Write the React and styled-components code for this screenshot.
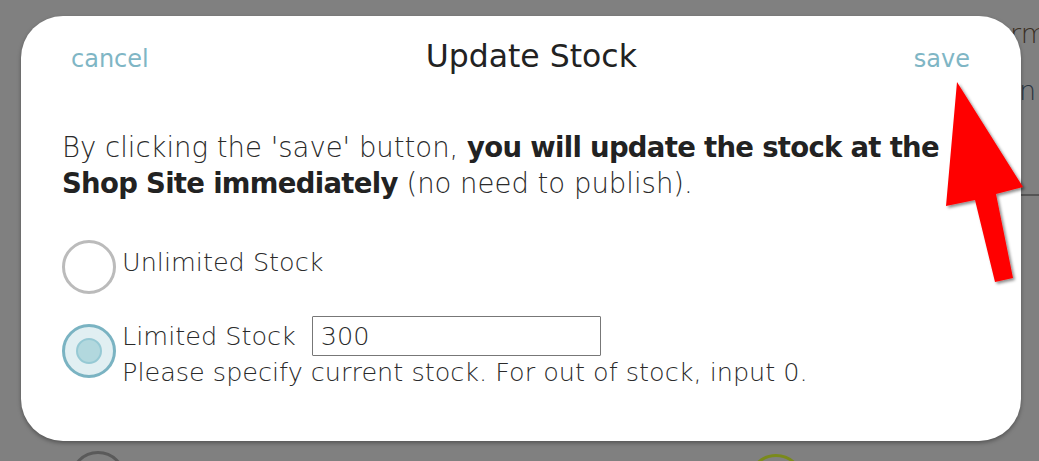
import React from "react";
import styled, { createGlobalStyle } from "styled-components";

const Global = createGlobalStyle`
  html, body { margin: 0; padding: 0; }
  body { width: 1039px; height: 461px; overflow: hidden; font-family: "DejaVu Sans", "Open Sans", sans-serif; }
`;

const Page = styled.div`
  position: relative;
  width: 1039px;
  height: 461px;
  overflow: hidden;
  background: #808080;
`;

const BgLayout = styled.div`
  display: grid;
  grid-template-columns: 1fr 60px;
  grid-template-rows: 196px 1fr;
  height: 100%;
`;

const BgSide = styled.div`
  grid-column: 2;
  display: flex;
  flex-direction: column;
  gap: 26px;
  padding-top: 18px;
  border-bottom: 2px solid #555;
  font-size: 27px;
  font-weight: 200;
  white-space: nowrap;
  overflow: hidden;
  direction: rtl;
`;

const BgWord = styled.span`
  color: ${(p) => p.$color};
  direction: ltr;
  text-align: right;
  margin-right: ${(p) => p.$shift}px;
`;

const BgBottom = styled.div`
  grid-column: 1 / span 2;
  display: flex;
  align-items: flex-start;
  padding: 255px 0 0 70px;
  gap: 622px;
`;

const BgCircle = styled.div`
  width: 50px;
  height: 50px;
  border-radius: 50%;
  border: 3px solid ${(p) => p.$color};
  margin-top: ${(p) => p.$top}px;
  flex: none;
`;

const Modal = styled.div`
  position: absolute;
  top: 16px;
  left: 21px;
  width: 1000px;
  height: 425px;
  box-sizing: border-box;
  background: #fff;
  border-radius: 42px;
  box-shadow: 0 2px 4px rgba(0, 0, 0, 0.35);
  display: flex;
  flex-direction: column;
`;

const Header = styled.div`
  display: flex;
  justify-content: space-between;
  align-items: baseline;
  padding: 20px 51px 0 50px;
`;

const LinkButton = styled.button`
  background: none;
  border: none;
  padding: 0;
  font-family: inherit;
  font-size: 24px;
  line-height: 40px;
  font-weight: 400;
  color: #7fb6c5;
  cursor: pointer;
`;

const Title = styled.h1`
  margin: 0;
  font-size: 31.5px;
  line-height: 40px;
  font-weight: 400;
  color: #222;
`;

const Body = styled.div`
  display: flex;
  flex-direction: column;
  padding: 50px 50px 0 41px;
`;

const Intro = styled.p`
  margin: 0;
  font-size: 27.5px;
  line-height: 36px;
  font-weight: 200;
  color: #2a2a2a;
  b { font-weight: 700; color: #222; letter-spacing: -0.7px; }
`;

const Options = styled.div`
  display: flex;
  flex-direction: column;
  gap: 30px;
  margin-top: 39px;
`;

const Option = styled.label`
  display: flex;
  align-items: flex-start;
  gap: 6px;
`;

const Radio = styled.span`
  flex: none;
  width: 48px;
  height: 48px;
  border-radius: 50%;
  border: 3px solid ${(p) => (p.$checked ? "#7ab3c2" : "#bbb")};
  background: ${(p) => (p.$checked ? "#e1eff2" : "#fff")};
  display: flex;
  align-items: center;
  justify-content: center;
`;

const RadioDot = styled.span`
  width: 22px;
  height: 22px;
  border-radius: 50%;
  background: #b2d8de;
  border: 2px solid #96c9d4;
`;

const OptionText = styled.div`
  display: flex;
  flex-direction: column;
  font-size: 25.5px;
  font-weight: 200;
  color: #2a2a2a;
  line-height: ${(p) => p.$lh}px;
  margin-top: ${(p) => p.$mt}px;
`;

const LabelRow = styled.div`
  display: flex;
  align-items: center;
  gap: 16px;
`;

const StockInput = styled.input`
  width: 289px;
  height: 40px;
  box-sizing: border-box;
  border: 1px solid #777;
  border-radius: 1px;
  padding: 0 8px;
  font-family: inherit;
  font-size: 25.5px;
  font-weight: 200;
  color: #2a2a2a;
  outline: none;
`;

const ArrowSvg = styled.svg`
  position: absolute;
  left: 0;
  top: 0;
  width: 1039px;
  height: 461px;
  pointer-events: none;
`;

export default function App() {
  return (
    <Page>
      <Global />
      <BgLayout>
        <BgSide>
          <BgWord $color="#3a2f24" $shift={0}>Form</BgWord>
          <BgWord $color="#2a3540" $shift={3}>Con</BgWord>
        </BgSide>
        <BgBottom>
          <BgCircle $color="#5a5a5a" $top={0} />
          <BgCircle $color="#7a8a1c" $top={3} />
        </BgBottom>
      </BgLayout>

      <Modal>
        <Header>
          <LinkButton>cancel</LinkButton>
          <Title>Update Stock</Title>
          <LinkButton>save</LinkButton>
        </Header>
        <Body>
          <Intro>
            By clicking the 'save' button, <b>you will update the stock at the Shop Site immediately</b> (no need to publish).
          </Intro>
          <Options>
            <Option>
              <Radio />
              <OptionText $mt={4} $lh={37}>Unlimited Stock</OptionText>
            </Option>
            <Option>
              <Radio $checked>
                <RadioDot />
              </Radio>
              <OptionText $mt={-8} $lh={33}>
                <LabelRow>
                  Limited Stock
                  <StockInput defaultValue="300" />
                </LabelRow>
                Please specify current stock. For out of stock, input 0.
              </OptionText>
            </Option>
          </Options>
        </Body>
      </Modal>

      <ArrowSvg viewBox="0 0 1039 461">
        <defs>
          <filter id="sh" x="-20%" y="-20%" width="140%" height="140%">
            <feDropShadow dx="2" dy="2" stdDeviation="1.5" floodColor="#000" floodOpacity="0.45" />
          </filter>
        </defs>
        <polygon
          points="957,82 1023,187 996,194 1013,278 995,282 975,200 946,206"
          fill="#ff0000"
          filter="url(#sh)"
        />
      </ArrowSvg>
    </Page>
  );
}
